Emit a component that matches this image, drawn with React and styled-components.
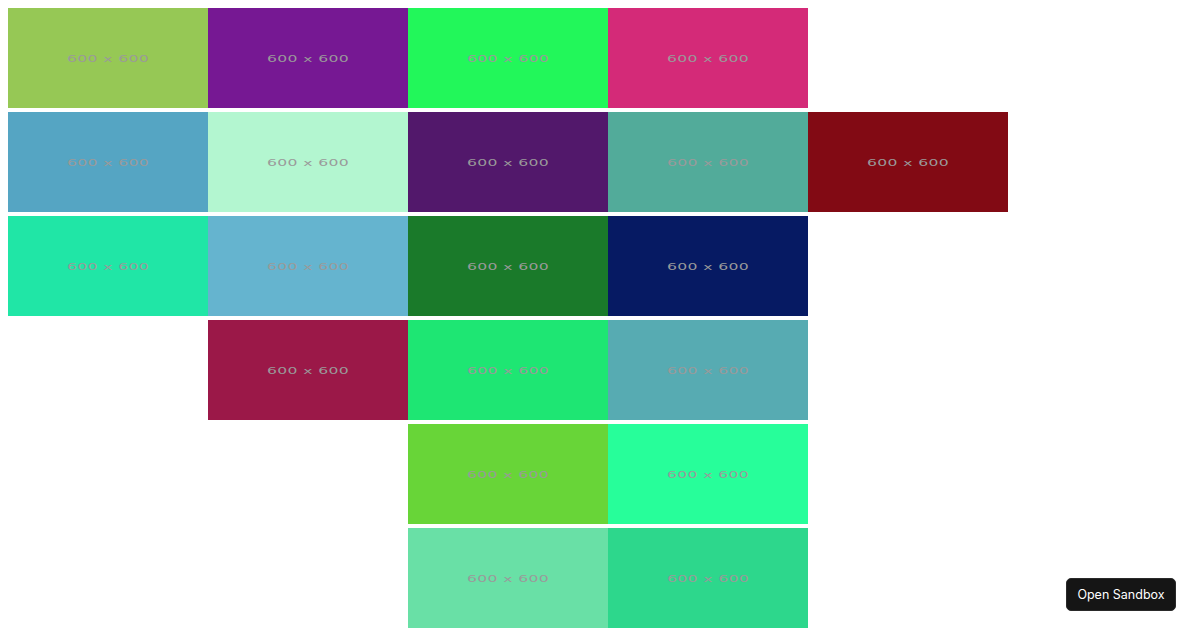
import React from "react";
import styled, { createGlobalStyle } from "styled-components";

const Global = createGlobalStyle`
  html, body { margin: 0; padding: 0; background: #fff; }
  body { padding: 8px; font-family: "DejaVu Sans", sans-serif; }
`;

const Grid = styled.div`
  display: grid;
  grid-template-columns: repeat(5, 200px);
  grid-auto-rows: 100px;
  row-gap: 4px;
`;

const Tile = styled.div`
  background: ${(p) => p.$bg};
  display: flex;
  align-items: center;
  justify-content: center;
  grid-column: ${(p) => p.$col};
  grid-row: ${(p) => p.$row};
`;

const Label = styled.span`
  display: inline-block;
  font-family: "DejaVu Sans", sans-serif;
  font-size: 8px;
  line-height: 8px;
  color: #9a9a9a;
  transform: scaleX(1.95);
  letter-spacing: 0.2px;
  margin-top: 4px;
  white-space: nowrap;
`;

const SandboxButton = styled.button`
  position: fixed;
  right: 24px;
  bottom: 19px;
  width: 110px;
  height: 33px;
  border: 1px solid #2a2a2a;
  border-radius: 5px;
  background: #151515;
  color: #fff;
  font-family: Inter, "Liberation Sans", sans-serif;
  font-weight: 400;
  font-size: 12.5px;
  cursor: pointer;
`;

const tiles = [
  [1, 1, "#96c855"], [1, 2, "#761893"], [1, 3, "#22f75a"], [1, 4, "#d42a78"],
  [2, 1, "#55a5c3"], [2, 2, "#b3f6d0"], [2, 3, "#52186b"], [2, 4, "#52ab9a"], [2, 5, "#820a14"],
  [3, 1, "#20e6a6"], [3, 2, "#65b4cf"], [3, 3, "#1a7a2a"], [3, 4, "#061a63"],
  [4, 2, "#9b1848"], [4, 3, "#1ee673"], [4, 4, "#57abb2"],
  [5, 3, "#68d538"], [5, 4, "#27fe9a"],
  [6, 3, "#69e0a6"], [6, 4, "#2dd78c"],
];

export default function App() {
  return (
    <>
      <Global />
      <Grid>
        {tiles.map(([r, c, bg]) => (
          <Tile key={`${r}-${c}`} $row={r} $col={c} $bg={bg}>
            <Label>600 x 600</Label>
          </Tile>
        ))}
      </Grid>
      <SandboxButton>Open Sandbox</SandboxButton>
    </>
  );
}
